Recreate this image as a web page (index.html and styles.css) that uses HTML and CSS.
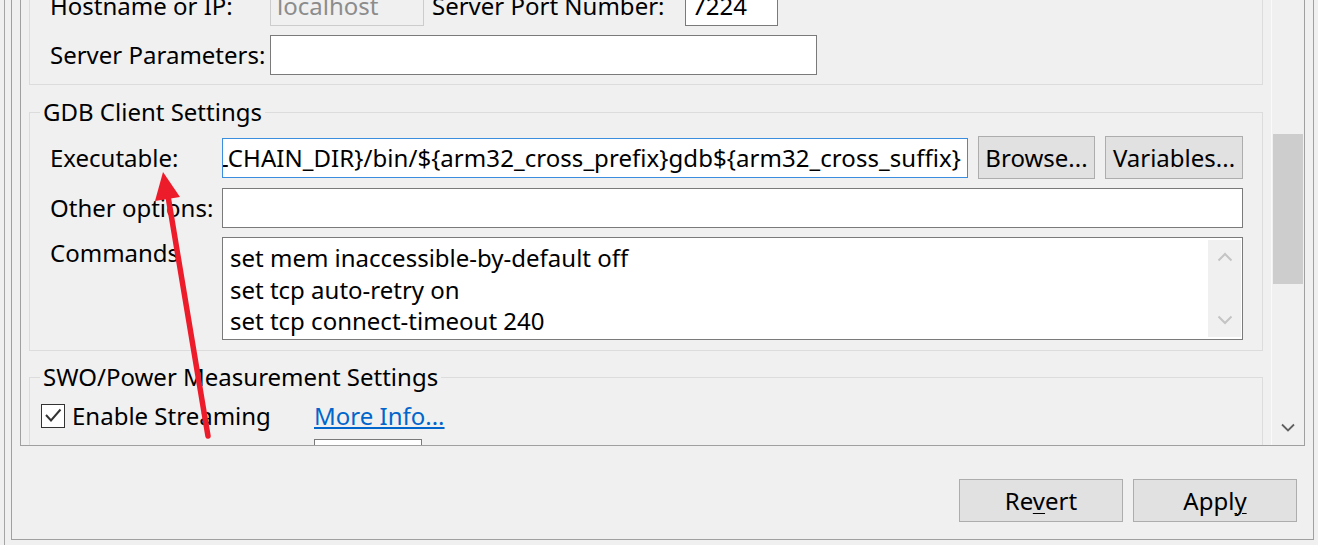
FILE: index.html
```html
<!DOCTYPE html>
<html lang="en">
<head>
<meta charset="utf-8">
<title>Debugger Settings</title>
<link rel="stylesheet" href="styles.css">
</head>
<body>
<div class="outer">
  <div class="panel">
    <div class="scroll">
      <div class="viewport">
        <div class="content">
          <div class="group server">
            <div class="row">
              <span class="label lbl-server">Hostname or IP:</span>
              <span class="field disabled host">localhost</span>
              <span class="label port-label">Server Port Number:</span>
              <span class="field port">7224</span>
            </div>
            <div class="row">
              <span class="label lbl-server">Server Parameters:</span>
              <span class="field params"></span>
            </div>
          </div>

          <fieldset class="fgroup gdb">
            <legend>GDB Client Settings</legend>
            <div class="gbody">
              <span class="label">Executable:</span>
              <div class="exec-row">
                <div class="field focus exec"><span class="exec-text">${TOOLCHAIN_DIR}/bin/${arm32_cross_prefix}gdb${arm32_cross_suffix}</span></div>
                <button class="btn browse">Browse...</button>
                <button class="btn variables">Variables...</button>
              </div>
              <span class="label">Other options:</span>
              <div class="field"></div>
              <span class="label top">Commands</span>
              <div class="textarea">
                <div class="lines">
                  <div>set mem inaccessible-by-default off</div>
                  <div>set tcp auto-retry on</div>
                  <div>set tcp connect-timeout 240</div>
                </div>
                <div class="mini-sb">
                  <div class="mini-btn"><svg width="16" height="10" viewBox="0 0 16 10"><path d="M1.5 8.5 L8 2 L14.5 8.5" fill="none" stroke="#c4c4c4" stroke-width="2"/></svg></div>
                  <div class="mini-btn"><svg width="16" height="10" viewBox="0 0 16 10"><path d="M1.5 1.5 L8 8 L14.5 1.5" fill="none" stroke="#c4c4c4" stroke-width="2"/></svg></div>
                </div>
              </div>
            </div>
          </fieldset>

          <fieldset class="fgroup swo">
            <legend>SWO/Power Measurement Settings</legend>
            <div class="sbody">
              <label class="check">
                <span class="box"><svg width="22" height="22" viewBox="0 0 22 22"><path d="M4 10 L9 15.5 L18.5 4.5" fill="none" stroke="#333" stroke-width="2"/></svg></span>
                <span class="check-text">Enable Streaming</span>
              </label>
              <a class="link">More Info...</a>
              <span></span>
              <span class="field small"></span>
            </div>
          </fieldset>
        </div>
      </div>
      <div class="vbar">
        <div class="vbar-top"></div>
        <div class="thumb"></div>
        <div class="vbar-fill"></div>
        <div class="vbar-arrow"><svg width="14" height="9" viewBox="0 0 14 9"><path d="M1 1.5 L7 7.5 L13 1.5" fill="none" stroke="#606060" stroke-width="1.8"/></svg></div>
      </div>
    </div>
    <div class="actions">
      <button class="btn action">Re<u>v</u>ert</button>
      <button class="btn action">Appl<u>y</u></button>
    </div>
  </div>
</div>
<svg class="annot" width="1318" height="545" viewBox="0 0 1318 545">
  <line x1="208" y1="436" x2="168" y2="196" stroke="#ec1c2b" stroke-width="5.5" stroke-linecap="round"/>
  <polygon points="163,172 155,201 180,197" fill="#ec1c2b"/>
</svg>
</body>
</html>
```
FILE: styles.css
```css
html, body {
  margin: 0;
  padding: 0;
}
body {
  width: 1318px;
  height: 545px;
  overflow: hidden;
  position: relative;
  background: #f0f0f0;
  font-family: "Noto Sans", "Open Sans", sans-serif;
  font-size: 24px;
  color: #000;
}
.outer {
  margin-left: 4px;
  border-left: 1px solid #a5a5a5;
  padding-left: 6px;
  height: 545px;
  box-sizing: border-box;
}
.panel {
  width: 1303px;
  height: 540px;
  box-sizing: border-box;
  border: 1px solid #a0a0a0;
  border-top: none;
  padding: 0 8px;
}
.scroll {
  display: flex;
  height: 446px;
  box-sizing: border-box;
  border: 1px solid #a0a0a0;
  border-top: none;
}
.viewport {
  flex: 1;
  min-width: 0;
  overflow: hidden;
  padding: 0 8px;
}
.content {
  margin-top: -25px;
}
.label {
  line-height: 32px;
  white-space: nowrap;
}
.field {
  display: flex;
  align-items: center;
  height: 40px;
  box-sizing: border-box;
  border: 1px solid #7a7a7a;
  background: #fff;
  padding: 0 6px;
  white-space: nowrap;
  overflow: hidden;
  line-height: 32px;
}
.field.disabled {
  background: #f0f0f0;
  border-color: #cccccc;
  color: #8c8c8c;
}
/* group 1 */
.group {
  border: 1px solid #dcdcdc;
  padding: 10px 19px 9px 20px;
  display: flex;
  flex-direction: column;
  gap: 9px;
}
.row {
  display: flex;
  align-items: center;
}
.lbl-server {
  width: 220px;
}
.host {
  width: 154px;
}
.port-label {
  margin-left: 8px;
  width: 253px;
}
.port {
  width: 93px;
}
.params {
  width: 547px;
}
/* fieldsets */
.fgroup {
  margin: 0;
  padding: 0;
  border: 1px solid #dcdcdc;
  min-inline-size: 0;
  min-width: 0;
}
.fgroup legend {
  margin-left: 10px;
  padding: 0 3px;
  line-height: 28px;
}
.gdb {
  margin-top: 13px;
}
.gbody {
  display: grid;
  grid-template-columns: 172px minmax(0, 1fr);
  grid-template-rows: 43px 40px 103px;
  row-gap: 9px;
  padding: 10px 19px 10px 20px;
}
.gbody > .label {
  align-self: center;
}
.gbody > .label.top {
  align-self: start;
}
.exec-row {
  display: flex;
  align-items: center;
  gap: 10px;
  min-width: 0;
}
.field.exec {
  flex: 1;
  min-width: 0;
  justify-content: flex-end;
}
.field.focus {
  border-color: #3b8ede;
}
.exec-text {
  flex: none;
  white-space: nowrap;
  letter-spacing: 0.06px;
}
.btn {
  font: inherit;
  color: #000;
  height: 43px;
  box-sizing: border-box;
  background: #e1e1e1;
  border: 1px solid #adadad;
  padding: 0;
  line-height: 32px;
  text-align: center;
  flex: none;
}
.browse {
  width: 117px;
}
.variables {
  width: 138px;
}
.textarea {
  display: flex;
  border: 1px solid #7a7a7a;
  background: #fff;
  box-sizing: border-box;
  min-width: 0;
}
.lines {
  flex: 1;
  padding: 4px 7px;
  line-height: 31.5px;
  white-space: nowrap;
  overflow: hidden;
}
.mini-sb {
  width: 33px;
  margin: 2px 1px 2px 0;
  background: #f0f0f0;
  display: flex;
  flex-direction: column;
  justify-content: space-between;
}
.mini-btn {
  height: 34px;
  display: flex;
  align-items: center;
  justify-content: center;
}
.swo {
  margin-top: 12px;
}
.sbody {
  display: grid;
  grid-template-columns: 273px 1fr;
  grid-template-rows: 32px 40px;
  row-gap: 7px;
  padding: 9px 19px 20px 11px;
  align-items: center;
}
.check {
  display: flex;
  align-items: center;
  gap: 7px;
}
.box {
  width: 24px;
  height: 24px;
  box-sizing: border-box;
  border: 1px solid #333;
  background: #fff;
  display: flex;
  align-items: center;
  justify-content: center;
}
.check-text {
  line-height: 32px;
  white-space: nowrap;
}
.link {
  color: #0066cc;
  text-decoration: underline;
  line-height: 32px;
  justify-self: start;
}
.field.small {
  width: 108px;
}
/* main scrollbar */
.vbar {
  width: 33px;
  flex: none;
  box-sizing: border-box;
  border-left: 1px solid #fafafa;
  background: #f0f0f0;
  display: flex;
  flex-direction: column;
}
.vbar-top {
  height: 134px;
}
.thumb {
  height: 150px;
  margin: 0 1px;
  background: #cdcdcd;
}
.vbar-fill {
  flex: 1;
}
.vbar-arrow {
  height: 36px;
  display: flex;
  align-items: center;
  justify-content: center;
}
/* bottom buttons */
.actions {
  display: flex;
  justify-content: flex-end;
  gap: 10px;
  margin-top: 33px;
  padding-right: 8px;
}
.action {
  width: 164px;
}
.action u {
  text-decoration-thickness: 1px;
  text-underline-offset: 3px;
}
.annot {
  position: absolute;
  left: 0;
  top: 0;
  pointer-events: none;
}
```
